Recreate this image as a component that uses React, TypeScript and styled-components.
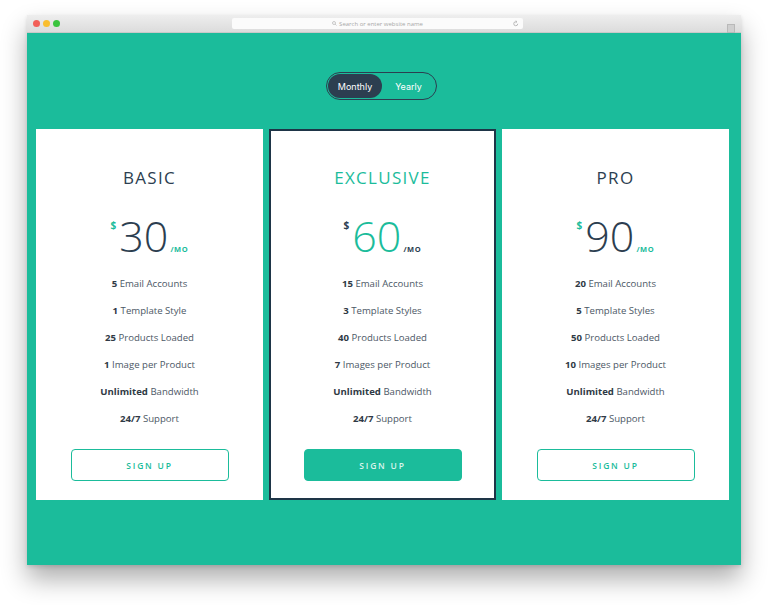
import React, { useState } from 'react'
import styled, { createGlobalStyle } from 'styled-components'

const GlobalStyle = createGlobalStyle`
  html, body {
    margin: 0;
    padding: 0;
    background: #ffffff;
    font-family: 'Open Sans', 'Liberation Sans', sans-serif;
  }
`

const teal = '#1bbc9b'
const navy = '#2c3e50'

const Stage = styled.div`
  width: 768px;
  height: 605px;
  padding: 15px 0 0 27px;
  box-sizing: border-box;
  overflow: hidden;
`

const Window = styled.div`
  width: 714px;
  box-shadow: 0 14px 24px rgba(0, 0, 0, 0.32), 0 2px 4px rgba(0, 0, 0, 0.12);
`

const TitleBar = styled.div`
  height: 18px;
  background: linear-gradient(#eeeeee, #dcdcdc);
  border-bottom: 1px solid #c9c9c9;
  box-sizing: border-box;
  display: flex;
  align-items: center;
  padding: 0 6px 0 6px;
`

const Lights = styled.div`
  display: flex;
  gap: 3px;
  width: 199px;
`

const Light = styled.span<{ $c: string }>`
  width: 7px;
  height: 7px;
  border-radius: 50%;
  background: ${(p) => p.$c};
`

const AddressBar = styled.div`
  width: 291px;
  height: 11px;
  background: #fbfbfb;
  border-radius: 2px;
  display: flex;
  align-items: center;
  justify-content: center;
  position: relative;
  font-size: 6px;
  color: #a8a8a8;
  gap: 2px;
`

const Reload = styled.svg`
  position: absolute;
  right: 4px;
  top: 2px;
`

const Spacer = styled.div`
  flex: 1;
`

const CornerBox = styled.div`
  width: 6px;
  height: 7px;
  background: #cfcfcf;
  border: 1px solid #b9b9b9;
  margin-top: 9px;
`

const Content = styled.div`
  background: ${teal};
  height: 532px;
  padding-top: 39px;
  box-sizing: border-box;
  display: flex;
  flex-direction: column;
  align-items: center;
`

const Toggle = styled.div`
  width: 111px;
  height: 28px;
  margin-right: 5px;
  border: 1.5px solid ${navy};
  border-radius: 14px;
  box-sizing: border-box;
  display: flex;
  align-items: center;
  padding: 0 1px;
`

const ToggleOption = styled.button<{ $active: boolean }>`
  border: none;
  height: 24px;
  border-radius: 12px;
  background: ${(p) => (p.$active ? navy : 'transparent')};
  color: #ffffff;
  font-family: 'Inter', 'Open Sans', sans-serif;
  font-size: 9px;
  font-weight: 400;
  cursor: pointer;
  padding: 0;
  flex: ${(p) => (p.$active ? '0 0 54px' : '1')};
`

const Cards = styled.div`
  align-self: flex-start;
  margin-top: 29px;
  margin-left: 9px;
  display: grid;
  grid-template-columns: repeat(3, 227px);
  gap: 6px;
`

const Card = styled.div<{ $featured?: boolean }>`
  height: 371px;
  background: #ffffff;
  box-sizing: border-box;
  border: ${(p) => (p.$featured ? `2px solid #1e3547` : 'none')};
  display: flex;
  flex-direction: column;
  align-items: center;
  padding-top: ${(p) => (p.$featured ? '35px' : '37px')};
`

const Title = styled.div<{ $featured?: boolean }>`
  font-size: 17px;
  line-height: 24px;
  letter-spacing: 1.3px;
  color: ${(p) => (p.$featured ? teal : navy)};
`

const PriceRow = styled.div`
  margin-top: 16px;
  height: 60px;
  display: flex;
  align-items: baseline;
  color: ${navy};
`

const Currency = styled.span<{ $featured?: boolean }>`
  align-self: flex-start;
  margin-top: 12px;
  margin-right: 3px;
  font-size: 10px;
  font-weight: 700;
  color: ${(p) => (p.$featured ? navy : teal)};
`

const Amount = styled.span<{ $featured?: boolean }>`
  font-size: 43px;
  font-weight: 300;
  line-height: 60px;
  color: ${(p) => (p.$featured ? teal : navy)};
`

const Period = styled.span<{ $featured?: boolean }>`
  font-size: 7.5px;
  font-weight: 700;
  letter-spacing: 0.6px;
  margin-left: 2px;
  color: ${(p) => (p.$featured ? navy : teal)};
`

const Features = styled.ul`
  list-style: none;
  margin: 4px 0 0;
  padding: 0;
  text-align: center;
`

const Feature = styled.li`
  height: 27px;
  line-height: 27px;
  font-size: 9.6px;
  color: #4c5866;

  b {
    font-weight: 700;
    color: #2f3a45;
  }
`

const SignUp = styled.button<{ $featured?: boolean }>`
  margin-top: 17px;
  width: 158px;
  height: 32px;
  box-sizing: border-box;
  border-radius: 4px;
  border: 1.5px solid ${teal};
  background: ${(p) => (p.$featured ? teal : '#ffffff')};
  color: ${(p) => (p.$featured ? '#d8f4ec' : teal)};
  font-family: 'Open Sans', sans-serif;
  font-size: 8.5px;
  font-weight: 600;
  letter-spacing: 1.8px;
  cursor: pointer;
`

type Plan = {
  name: string
  price: { monthly: number; yearly: number }
  featured?: boolean
  features: [string, string][]
}

const plans: Plan[] = [
  {
    name: 'BASIC',
    price: { monthly: 30, yearly: 300 },
    features: [
      ['5', 'Email Accounts'],
      ['1', 'Template Style'],
      ['25', 'Products Loaded'],
      ['1', 'Image per Product'],
      ['Unlimited', 'Bandwidth'],
      ['24/7', 'Support'],
    ],
  },
  {
    name: 'EXCLUSIVE',
    price: { monthly: 60, yearly: 600 },
    featured: true,
    features: [
      ['15', 'Email Accounts'],
      ['3', 'Template Styles'],
      ['40', 'Products Loaded'],
      ['7', 'Images per Product'],
      ['Unlimited', 'Bandwidth'],
      ['24/7', 'Support'],
    ],
  },
  {
    name: 'PRO',
    price: { monthly: 90, yearly: 900 },
    features: [
      ['20', 'Email Accounts'],
      ['5', 'Template Styles'],
      ['50', 'Products Loaded'],
      ['10', 'Images per Product'],
      ['Unlimited', 'Bandwidth'],
      ['24/7', 'Support'],
    ],
  },
]

const App = () => {
  const [yearly, setYearly] = useState(false)

  return (
    <Stage>
      <GlobalStyle />
      <Window>
        <TitleBar>
          <Lights>
            <Light $c="#f25f58" />
            <Light $c="#f9be2f" />
            <Light $c="#3ac43f" />
          </Lights>
          <AddressBar>
            <svg width="5" height="5" viewBox="0 0 10 10">
              <circle cx="4" cy="4" r="3" fill="none" stroke="#aaa" strokeWidth="1.2" />
              <path d="M6.2 6.2 L9 9" stroke="#aaa" strokeWidth="1.2" />
            </svg>
            Search or enter website name
            <Reload width="6" height="7" viewBox="0 0 12 14">
              <path d="M9.5 7.5 A4 4 0 1 1 6 3.5" fill="none" stroke="#999" strokeWidth="1.3" />
              <path d="M5.5 1.5 L8 3.5 L5.5 5.5" fill="none" stroke="#999" strokeWidth="1.3" />
            </Reload>
          </AddressBar>
          <Spacer />
          <CornerBox />
        </TitleBar>
        <Content>
          <Toggle>
            <ToggleOption $active={!yearly} onClick={() => setYearly(false)}>
              Monthly
            </ToggleOption>
            <ToggleOption $active={yearly} onClick={() => setYearly(true)}>
              Yearly
            </ToggleOption>
          </Toggle>
          <Cards>
            {plans.map((plan) => (
              <Card key={plan.name} $featured={plan.featured}>
                <Title $featured={plan.featured}>{plan.name}</Title>
                <PriceRow>
                  <Currency $featured={plan.featured}>$</Currency>
                  <Amount $featured={plan.featured}>
                    {yearly ? plan.price.yearly : plan.price.monthly}
                  </Amount>
                  <Period $featured={plan.featured}>{yearly ? '/YR' : '/MO'}</Period>
                </PriceRow>
                <Features>
                  {plan.features.map(([strong, rest]) => (
                    <Feature key={rest}>
                      <b>{strong}</b> {rest}
                    </Feature>
                  ))}
                </Features>
                <SignUp $featured={plan.featured}>SIGN UP</SignUp>
              </Card>
            ))}
          </Cards>
        </Content>
      </Window>
    </Stage>
  )
}

export default App
